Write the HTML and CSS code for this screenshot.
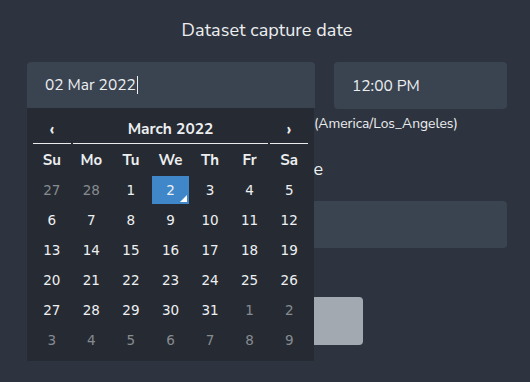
FILE: index.html
```html
<!DOCTYPE html>
<html>
<head>
<meta charset="utf-8">
<link rel="stylesheet" href="styles.css">
</head>
<body>
<div class="page">
  <h1 class="title">Dataset capture date</h1>
  <div class="row">
    <div class="date-wrap">
      <div class="field date-field">02 Mar 2022<span class="caret"></span></div>
      <div class="calendar">
        <table class="cal">
          <thead>
            <tr class="nav">
              <th class="arrow">‹</th>
              <th class="month" colspan="5">March 2022</th>
              <th class="arrow">›</th>
            </tr>
            <tr class="dow">
              <th>Su</th><th>Mo</th><th>Tu</th><th>We</th><th>Th</th><th>Fr</th><th>Sa</th>
            </tr>
          </thead>
          <tbody>
            <tr><td class="other">27</td><td class="other">28</td><td>1</td><td class="sel">2</td><td>3</td><td>4</td><td>5</td></tr>
            <tr><td>6</td><td>7</td><td>8</td><td>9</td><td>10</td><td>11</td><td>12</td></tr>
            <tr><td>13</td><td>14</td><td>15</td><td>16</td><td>17</td><td>18</td><td>19</td></tr>
            <tr><td>20</td><td>21</td><td>22</td><td>23</td><td>24</td><td>25</td><td>26</td></tr>
            <tr><td>27</td><td>28</td><td>29</td><td>30</td><td>31</td><td class="other">1</td><td class="other">2</td></tr>
            <tr><td class="other">3</td><td class="other">4</td><td class="other">5</td><td class="other">6</td><td class="other">7</td><td class="other">8</td><td class="other">9</td></tr>
          </tbody>
        </table>
      </div>
    </div>
    <div class="field time-field">12:00 PM</div>
  </div>
  <div class="note">(America/Los_Angeles)</div>
  <div class="label">Dataset capture time zone</div>
  <div class="field wide-field"></div>
  <div class="button"></div>
</div>
</body>
</html>
```

FILE: styles.css
```css
html, body {
  margin: 0;
  padding: 0;
  background: #2e343f;
}
.page {
  width: 530px;
  height: 382px;
  overflow: hidden;
  font-family: "Nunito Sans", "Open Sans", "Noto Sans", sans-serif;
  color: #eceef0;
  box-sizing: border-box;
  padding: 18px 23px 0 27px;
}
.title {
  margin: 0;
  font-size: 18px;
  font-weight: 400;
  line-height: 24px;
  letter-spacing: 0.1px;
  text-align: center;
}
.row {
  display: flex;
  gap: 19px;
  margin-top: 20px;
  align-items: flex-start;
}
.date-wrap {
  position: relative;
  width: 288px;
}
.field {
  background: #3a4450;
  border-radius: 4px;
  box-sizing: border-box;
  height: 47px;
  padding-left: 18px;
  font-size: 15.5px;
  line-height: 47px;
}
.date-field {
  height: 46px;
  line-height: 46px;
  border-radius: 4px 4px 0 0;
}
.caret {
  display: inline-block;
  width: 1px;
  height: 18px;
  margin-left: 1px;
  background: #f0f0f0;
  vertical-align: -4px;
}
.time-field {
  width: 173px;
}
.calendar {
  position: absolute;
  top: 46px;
  left: 0;
  width: 287px;
  height: 253px;
  background: #262b33;
  box-sizing: border-box;
  padding: 4px;
  z-index: 2;
}
.cal {
  border-spacing: 2px;
  border-collapse: separate;
  width: 100%;
  table-layout: fixed;
}
.cal th, .cal td {
  padding: 0;
  text-align: center;
  line-height: 20px;
}
.nav th {
  height: 29px;
  border-bottom: 1px solid #e8eaec;
  font-size: 15.5px;
  font-weight: 700;
}
.nav .arrow {
  font-size: 18px;
}
.dow th {
  height: 28px;
  font-size: 15px;
  font-weight: 700;
}
.cal td {
  height: 28px;
  font-family: "DejaVu Sans", Verdana, sans-serif;
  font-size: 13.5px;
  color: #eef0f2;
}
.cal td.other {
  color: #878b91;
}
.cal td.sel {
  background: #3f87c8;
  position: relative;
}
.cal td.sel::after {
  content: "";
  position: absolute;
  right: 2px;
  bottom: 2px;
  border-style: solid;
  border-width: 0 0 7px 7px;
  border-color: transparent transparent #ffffff transparent;
}
.note {
  margin-top: 6px;
  padding-left: 287px;
  font-size: 13.8px;
  line-height: 18px;
}
.label {
  margin-top: 24px;
  font-size: 18px;
  line-height: 24px;
  width: 296px;
  text-align: right;
}
.wide-field {
  margin-top: 20px;
  width: 480px;
}
.button {
  margin-top: 49px;
  width: 336px;
  height: 48px;
  border-radius: 4px;
  background: #a3a9b0;
}
```
